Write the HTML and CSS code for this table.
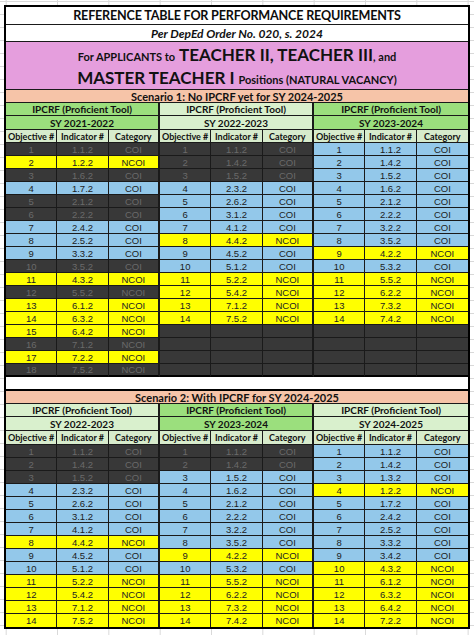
FILE: index.html
```html
<!DOCTYPE html>
<html>
<head>
<meta charset="utf-8">
<link rel="stylesheet" href="styles.css">
</head>
<body>
<div class="sheet">
  <div class="row full r-title"><div class="c title">REFERENCE TABLE FOR PERFORMANCE REQUIREMENTS</div></div>
  <div class="row full r-sub"><div class="c sub">Per DepEd Order No. 020, s. 2024</div></div>
  <div class="row full r-purple"><div class="c purple">
    <div class="pl"><span class="sm">For APPLICANTS to</span>&nbsp;<span class="lg">TEACHER II, TEACHER III</span><span class="sm">, and</span></div>
    <div class="pl"><span class="lg">MASTER TEACHER I</span>&nbsp;<span class="sm">Positions (NATURAL VACANCY)</span></div>
  </div></div>

  <div class="row full r-scn"><div class="c scn">Scenario 1: No IPCRF yet for SY 2024-2025</div></div>
  <div class="row g3 r-h"><div class="c hb">IPCRF (Proficient Tool)</div><div class="c hl">IPCRF (Proficient Tool)</div><div class="c hb">IPCRF (Proficient Tool)</div></div>
  <div class="row g3 r-sy"><div class="c hb">SY 2021-2022</div><div class="c hl">SY 2022-2023</div><div class="c hb">SY 2023-2024</div></div>
  <div class="row r-hd">
    <div class="c th">Objective #</div><div class="c th">Indicator #</div><div class="c th">Category</div>
    <div class="c th">Objective #</div><div class="c th">Indicator #</div><div class="c th">Category</div>
    <div class="c th">Objective #</div><div class="c th">Indicator #</div><div class="c th">Category</div>
  </div>
  <div class="row d"><div class="c k">1</div><div class="c k">1.1.2</div><div class="c k">COI</div><div class="c k">1</div><div class="c k">1.1.2</div><div class="c k">COI</div><div class="c b">1</div><div class="c b">1.1.2</div><div class="c b">COI</div></div>
  <div class="row d"><div class="c y">2</div><div class="c y">1.2.2</div><div class="c y">NCOI</div><div class="c k">2</div><div class="c k">1.4.2</div><div class="c k">COI</div><div class="c b">2</div><div class="c b">1.4.2</div><div class="c b">COI</div></div>
  <div class="row d"><div class="c k">3</div><div class="c k">1.6.2</div><div class="c k">COI</div><div class="c k">3</div><div class="c k">1.5.2</div><div class="c k">COI</div><div class="c b">3</div><div class="c b">1.5.2</div><div class="c b">COI</div></div>
  <div class="row d"><div class="c b">4</div><div class="c b">1.7.2</div><div class="c b">COI</div><div class="c b">4</div><div class="c b">2.3.2</div><div class="c b">COI</div><div class="c b">4</div><div class="c b">1.6.2</div><div class="c b">COI</div></div>
  <div class="row d"><div class="c k">5</div><div class="c k">2.1.2</div><div class="c k">COI</div><div class="c b">5</div><div class="c b">2.6.2</div><div class="c b">COI</div><div class="c b">5</div><div class="c b">2.1.2</div><div class="c b">COI</div></div>
  <div class="row d"><div class="c k">6</div><div class="c k">2.2.2</div><div class="c k">COI</div><div class="c b">6</div><div class="c b">3.1.2</div><div class="c b">COI</div><div class="c b">6</div><div class="c b">2.2.2</div><div class="c b">COI</div></div>
  <div class="row d"><div class="c b">7</div><div class="c b">2.4.2</div><div class="c b">COI</div><div class="c b">7</div><div class="c b">4.1.2</div><div class="c b">COI</div><div class="c b">7</div><div class="c b">3.2.2</div><div class="c b">COI</div></div>
  <div class="row d"><div class="c b">8</div><div class="c b">2.5.2</div><div class="c b">COI</div><div class="c y">8</div><div class="c y">4.4.2</div><div class="c y">NCOI</div><div class="c b">8</div><div class="c b">3.5.2</div><div class="c b">COI</div></div>
  <div class="row d"><div class="c b">9</div><div class="c b">3.3.2</div><div class="c b">COI</div><div class="c b">9</div><div class="c b">4.5.2</div><div class="c b">COI</div><div class="c y">9</div><div class="c y">4.2.2</div><div class="c y">NCOI</div></div>
  <div class="row d"><div class="c k">10</div><div class="c k">3.5.2</div><div class="c k">COI</div><div class="c b">10</div><div class="c b">5.1.2</div><div class="c b">COI</div><div class="c b">10</div><div class="c b">5.3.2</div><div class="c b">COI</div></div>
  <div class="row d"><div class="c y">11</div><div class="c y">4.3.2</div><div class="c y">NCOI</div><div class="c y">11</div><div class="c y">5.2.2</div><div class="c y">NCOI</div><div class="c y">11</div><div class="c y">5.5.2</div><div class="c y">NCOI</div></div>
  <div class="row d"><div class="c k">12</div><div class="c k">5.5.2</div><div class="c k">NCOI</div><div class="c y">12</div><div class="c y">5.4.2</div><div class="c y">NCOI</div><div class="c y">12</div><div class="c y">6.2.2</div><div class="c y">NCOI</div></div>
  <div class="row d"><div class="c y">13</div><div class="c y">6.1.2</div><div class="c y">NCOI</div><div class="c y">13</div><div class="c y">7.1.2</div><div class="c y">NCOI</div><div class="c y">13</div><div class="c y">7.3.2</div><div class="c y">NCOI</div></div>
  <div class="row d"><div class="c y">14</div><div class="c y">6.3.2</div><div class="c y">NCOI</div><div class="c y">14</div><div class="c y">7.5.2</div><div class="c y">NCOI</div><div class="c y">14</div><div class="c y">7.4.2</div><div class="c y">NCOI</div></div>
  <div class="row d"><div class="c y">15</div><div class="c y">6.4.2</div><div class="c y">NCOI</div><div class="c k"></div><div class="c k"></div><div class="c k"></div><div class="c k"></div><div class="c k"></div><div class="c k"></div></div>
  <div class="row d"><div class="c k">16</div><div class="c k">7.1.2</div><div class="c k">NCOI</div><div class="c k"></div><div class="c k"></div><div class="c k"></div><div class="c k"></div><div class="c k"></div><div class="c k"></div></div>
  <div class="row d"><div class="c y">17</div><div class="c y">7.2.2</div><div class="c y">NCOI</div><div class="c k"></div><div class="c k"></div><div class="c k"></div><div class="c k"></div><div class="c k"></div><div class="c k"></div></div>
  <div class="row d last"><div class="c k">18</div><div class="c k">7.5.2</div><div class="c k">NCOI</div><div class="c k"></div><div class="c k"></div><div class="c k"></div><div class="c k"></div><div class="c k"></div><div class="c k"></div></div>

  <div class="row full r-blank"><div class="c blank"></div></div>

  <div class="row full r-scn"><div class="c scn">Scenario 2: With IPCRF for SY 2024-2025</div></div>
  <div class="row g3 r-h"><div class="c hl">IPCRF (Proficient Tool)</div><div class="c hb">IPCRF (Proficient Tool)</div><div class="c hl">IPCRF (Proficient Tool)</div></div>
  <div class="row g3 r-sy"><div class="c hl">SY 2022-2023</div><div class="c hb">SY 2023-2024</div><div class="c hl">SY 2024-2025</div></div>
  <div class="row r-hd r-hd2">
    <div class="c th">Objective #</div><div class="c th">Indicator #</div><div class="c th">Category</div>
    <div class="c th">Objective #</div><div class="c th">Indicator #</div><div class="c th">Category</div>
    <div class="c th">Objective #</div><div class="c th">Indicator #</div><div class="c th">Category</div>
  </div>
  <div class="row d"><div class="c k">1</div><div class="c k">1.1.2</div><div class="c k">COI</div><div class="c k">1</div><div class="c k">1.1.2</div><div class="c k">COI</div><div class="c b">1</div><div class="c b">1.1.2</div><div class="c b">COI</div></div>
  <div class="row d"><div class="c k">2</div><div class="c k">1.4.2</div><div class="c k">COI</div><div class="c k">2</div><div class="c k">1.4.2</div><div class="c k">COI</div><div class="c b">2</div><div class="c b">1.4.2</div><div class="c b">COI</div></div>
  <div class="row d"><div class="c k">3</div><div class="c k">1.5.2</div><div class="c k">COI</div><div class="c b">3</div><div class="c b">1.5.2</div><div class="c b">COI</div><div class="c b">3</div><div class="c b">1.3.2</div><div class="c b">COI</div></div>
  <div class="row d"><div class="c b">4</div><div class="c b">2.3.2</div><div class="c b">COI</div><div class="c b">4</div><div class="c b">1.6.2</div><div class="c b">COI</div><div class="c y">4</div><div class="c y">1.2.2</div><div class="c y">NCOI</div></div>
  <div class="row d"><div class="c b">5</div><div class="c b">2.6.2</div><div class="c b">COI</div><div class="c b">5</div><div class="c b">2.1.2</div><div class="c b">COI</div><div class="c b">5</div><div class="c b">1.7.2</div><div class="c b">COI</div></div>
  <div class="row d"><div class="c b">6</div><div class="c b">3.1.2</div><div class="c b">COI</div><div class="c b">6</div><div class="c b">2.2.2</div><div class="c b">COI</div><div class="c b">6</div><div class="c b">2.4.2</div><div class="c b">COI</div></div>
  <div class="row d"><div class="c b">7</div><div class="c b">4.1.2</div><div class="c b">COI</div><div class="c b">7</div><div class="c b">3.2.2</div><div class="c b">COI</div><div class="c b">7</div><div class="c b">2.5.2</div><div class="c b">COI</div></div>
  <div class="row d"><div class="c y">8</div><div class="c y">4.4.2</div><div class="c y">NCOI</div><div class="c b">8</div><div class="c b">3.5.2</div><div class="c b">COI</div><div class="c b">8</div><div class="c b">3.3.2</div><div class="c b">COI</div></div>
  <div class="row d"><div class="c b">9</div><div class="c b">4.5.2</div><div class="c b">COI</div><div class="c y">9</div><div class="c y">4.2.2</div><div class="c y">NCOI</div><div class="c b">9</div><div class="c b">3.4.2</div><div class="c b">COI</div></div>
  <div class="row d"><div class="c b">10</div><div class="c b">5.1.2</div><div class="c b">COI</div><div class="c b">10</div><div class="c b">5.3.2</div><div class="c b">COI</div><div class="c y">10</div><div class="c y">4.3.2</div><div class="c y">NCOI</div></div>
  <div class="row d"><div class="c y">11</div><div class="c y">5.2.2</div><div class="c y">NCOI</div><div class="c y">11</div><div class="c y">5.5.2</div><div class="c y">NCOI</div><div class="c y">11</div><div class="c y">6.1.2</div><div class="c y">NCOI</div></div>
  <div class="row d"><div class="c y">12</div><div class="c y">5.4.2</div><div class="c y">NCOI</div><div class="c y">12</div><div class="c y">6.2.2</div><div class="c y">NCOI</div><div class="c y">12</div><div class="c y">6.3.2</div><div class="c y">NCOI</div></div>
  <div class="row d"><div class="c y">13</div><div class="c y">7.1.2</div><div class="c y">NCOI</div><div class="c y">13</div><div class="c y">7.3.2</div><div class="c y">NCOI</div><div class="c y">13</div><div class="c y">6.4.2</div><div class="c y">NCOI</div></div>
  <div class="row d end"><div class="c y">14</div><div class="c y">7.5.2</div><div class="c y">NCOI</div><div class="c y">14</div><div class="c y">7.4.2</div><div class="c y">NCOI</div><div class="c y">14</div><div class="c y">7.2.2</div><div class="c y">NCOI</div></div>
</div>
</body>
</html>
```
FILE: styles.css
```css
html, body {
  margin: 0;
  padding: 0;
}
body {
  width: 474px;
  height: 635px;
  overflow: hidden;
  background-color: #fff;
  background-image:
    linear-gradient(90deg, #d9d9d9 1px, transparent 1px),
    linear-gradient(180deg, #d9d9d9 1px, transparent 1px);
  background-size: 51.33px 100%, 100% 13px;
  background-position: 5.7px 0, 0 1px;
  font-family: "Liberation Sans", Arial, sans-serif;
  color: #1c1c22;
}
.sheet {
  box-sizing: border-box;
  width: 466px;
  margin: 5px 0 0 4px;
  border: 2px solid #000;
  background: #fff;
}
.row {
  display: grid;
  grid-template-columns: repeat(9, 1fr);
}
.c {
  box-sizing: border-box;
  display: flex;
  align-items: center;
  justify-content: center;
  border-right: 1px solid #1a1a1a;
  border-bottom: 1px solid #1a1a1a;
  white-space: nowrap;
  overflow: hidden;
  min-width: 0;
}
.row > .c:nth-child(3), .row > .c:nth-child(6) { border-right-width: 2px; }
.row > .c:nth-child(9) { border-right: none; }
.row.full > .c { grid-column: span 9; border-right: none; }
.row.g3 > .c { grid-column: span 3; border-right: 2px solid #1a1a1a; }
.row.g3 > .c:nth-child(3) { border-right: none; }

.r-title { height: 18px; }
.r-sub { height: 17px; }
.r-purple { height: 48px; }
.r-scn { height: 13px; }
.r-h { height: 13px; }
.r-sy { height: 14px; }
.r-hd { height: 13px; }
.r-hd2 { height: 14px; }
.d { height: 13px; }
.r-blank { height: 14px; }

.d.last > .c { border-bottom: 2px solid #000; }
.d.end > .c { border-bottom: none; }
.blank { border-bottom: 2px solid #000 !important; background: #fff; }

.title {
  font-family: Lato, "Liberation Sans", sans-serif;
  font-weight: 700;
  font-size: 12.6px;
  letter-spacing: -0.2px;
  color: #0d0d0d;
}
.sub {
  font-family: Lato, "Liberation Sans", sans-serif;
  font-weight: 700;
  font-style: italic;
  font-size: 12px;
  color: #111;
}
.purple {
  background: #e59edd;
  flex-direction: column;
  font-family: Lato, "Liberation Sans", sans-serif;
  font-weight: 700;
  color: #111;
}
.pl {
  height: 23px;
  display: flex;
  align-items: center;
  line-height: 1;
}
.pl .sm { font-size: 11px; padding-top: 4px; }
.pl .lg { font-size: 17px; }
.scn {
  background: #f6c4a8;
  font-family: Lato, "Liberation Sans", sans-serif;
  font-weight: 700;
  font-size: 11px;
  color: #111;
}
.hb, .hl, .th {
  font-family: Lato, "Liberation Sans", sans-serif;
  font-weight: 700;
  font-size: 10px;
  color: #111;
}
.th { font-size: 9px; }
.hb { background: #9bdf7d; }
.hl { background: #d9f0cd; }
.th { background: #d7ebcc; }
.d > .c {
  font-size: 9.5px;
}
.k { background: #383838; color: #6a6a6a; }
.b { background: #93c8ea; }
.y { background: #ffff00; }
```
